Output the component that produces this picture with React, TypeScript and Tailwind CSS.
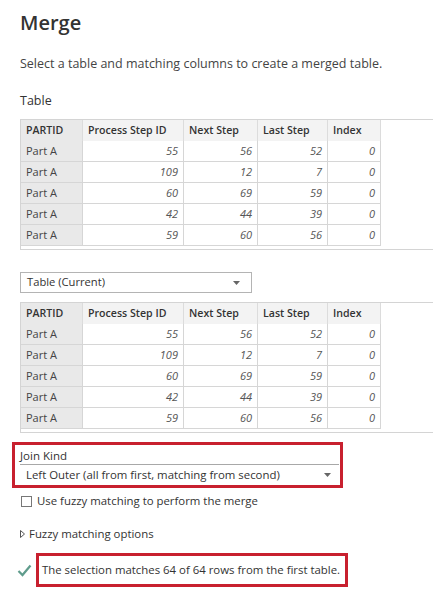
import React from "react";

const rows = [
  [55, 56, 52, 0],
  [109, 12, 7, 0],
  [60, 69, 59, 0],
  [42, 44, 39, 0],
  [59, 60, 56, 0],
];

const widths = ["w-[101px]", "w-[74px]", "w-[70px]", "w-[53px]"];
const headers = ["Process Step ID", "Next Step", "Last Step", "Index"];

function DataTable() {
  return (
    <div className="border-t border-l border-b border-[#d4d4d4] pb-[3px] text-[11px]">
      <div className="flex h-[21px] items-center">
        <div className="w-[62px] h-full bg-[#e9e9e9] border-r border-[#dcdcdc] font-semibold text-[10.6px] pl-[5px] flex items-center text-[#333]">
          PARTID
        </div>
        {headers.map((h, i) => (
          <div
            key={h}
            className={`${widths[i]} h-full bg-[#f3f3f3] border-r border-[#dcdcdc] font-semibold text-[10.6px] pl-[5px] flex items-center text-[#333]`}
          >
            {h}
          </div>
        ))}
      </div>
      {rows.map((r, i) => (
        <div key={i} className="flex h-[21px]">
          <div className="w-[62px] h-full bg-[#e9e9e9] border-r border-b border-[#d6d6d6] pl-[5px] flex items-center text-[#444]">
            Part A
          </div>
          {r.map((v, j) => (
            <div
              key={j}
              className={`${widths[j]} h-full border-r border-b border-[#d6d6d6] pr-[5px] flex items-center justify-end italic text-[#555]`}
            >
              {v}
            </div>
          ))}
        </div>
      ))}
    </div>
  );
}

function Arrow() {
  return (
    <svg width="7" height="4" viewBox="0 0 7 4">
      <path d="M0 0 H7 L3.5 4 Z" fill="#666" />
    </svg>
  );
}

export default function App() {
  return (
    <div
      className="w-[433px] h-[596px] bg-white overflow-hidden text-[#333]"
      style={{ fontFamily: '"Open Sans", "Noto Sans", sans-serif' }}
    >
      <div className="pl-[20px]">
        <h1 className="text-[20px] font-semibold leading-[28px] pt-[9px] text-[#333]">Merge</h1>
        <p className="text-[12.5px] leading-[20px] mt-[17px] text-[#444]">
          Select a table and matching columns to create a merged table.
        </p>
        <p className="text-[12.5px] leading-[20px] mt-[17px] text-[#333]">Table</p>
        <div className="mt-[8px]">
          <DataTable />
        </div>
        <div className="mt-[22px] w-[232px] h-[21px] border border-[#b4b4b4] flex items-center justify-between pl-[6px] pr-[11px] text-[11.2px] text-[#333]">
          <span>Table (Current)</span>
          <Arrow />
        </div>
        <div className="mt-[9px]">
          <DataTable />
        </div>
        <div className="-ml-[8px] mt-[9px] w-[331px] h-[46px] border-[3px] border-[#c8202f] pl-[5px] pr-[1px]">
          <div className="text-[11.5px] leading-[17px] pt-[2px] text-[#333]">Join Kind</div>
          <div className="h-[21px] border-t border-[#a8a8a8] flex items-center justify-between pl-[6px] pr-[8px] text-[11.4px] text-[#333]">
            <span>Left Outer (all from first, matching from second)</span>
            <Arrow />
          </div>
        </div>
        <div className="flex items-center gap-[5px] mt-[5px] ml-[1px]">
          <div className="w-[11px] h-[11px] border border-[#777] bg-white" />
          <span className="text-[11.4px] leading-[16px] text-[#333]">Use fuzzy matching to perform the merge</span>
        </div>
        <div className="flex items-center gap-[4px] mt-[17px]">
          <svg width="5" height="8" viewBox="0 0 5 8">
            <path d="M0.5 0.5 L4.5 4 L0.5 7.5 Z" fill="none" stroke="#555" strokeWidth="1" />
          </svg>
          <span className="text-[11.4px] leading-[16px] text-[#333]">Fuzzy matching options</span>
        </div>
        <div className="flex items-center -ml-[3px] mt-[11px]">
          <svg width="15" height="13" viewBox="0 0 15 13" className="mr-[4px]">
            <path d="M1.5 7 L5.5 11 L13.5 1.5" fill="none" stroke="#5f9c8c" strokeWidth="2.2" />
          </svg>
          <div className="w-[312px] h-[34px] border-[3px] border-[#c8202f] flex items-center pl-[3px] text-[11.4px] text-[#333] whitespace-nowrap">
            The selection matches 64 of 64 rows from the first table.
          </div>
        </div>
      </div>
    </div>
  );
}
